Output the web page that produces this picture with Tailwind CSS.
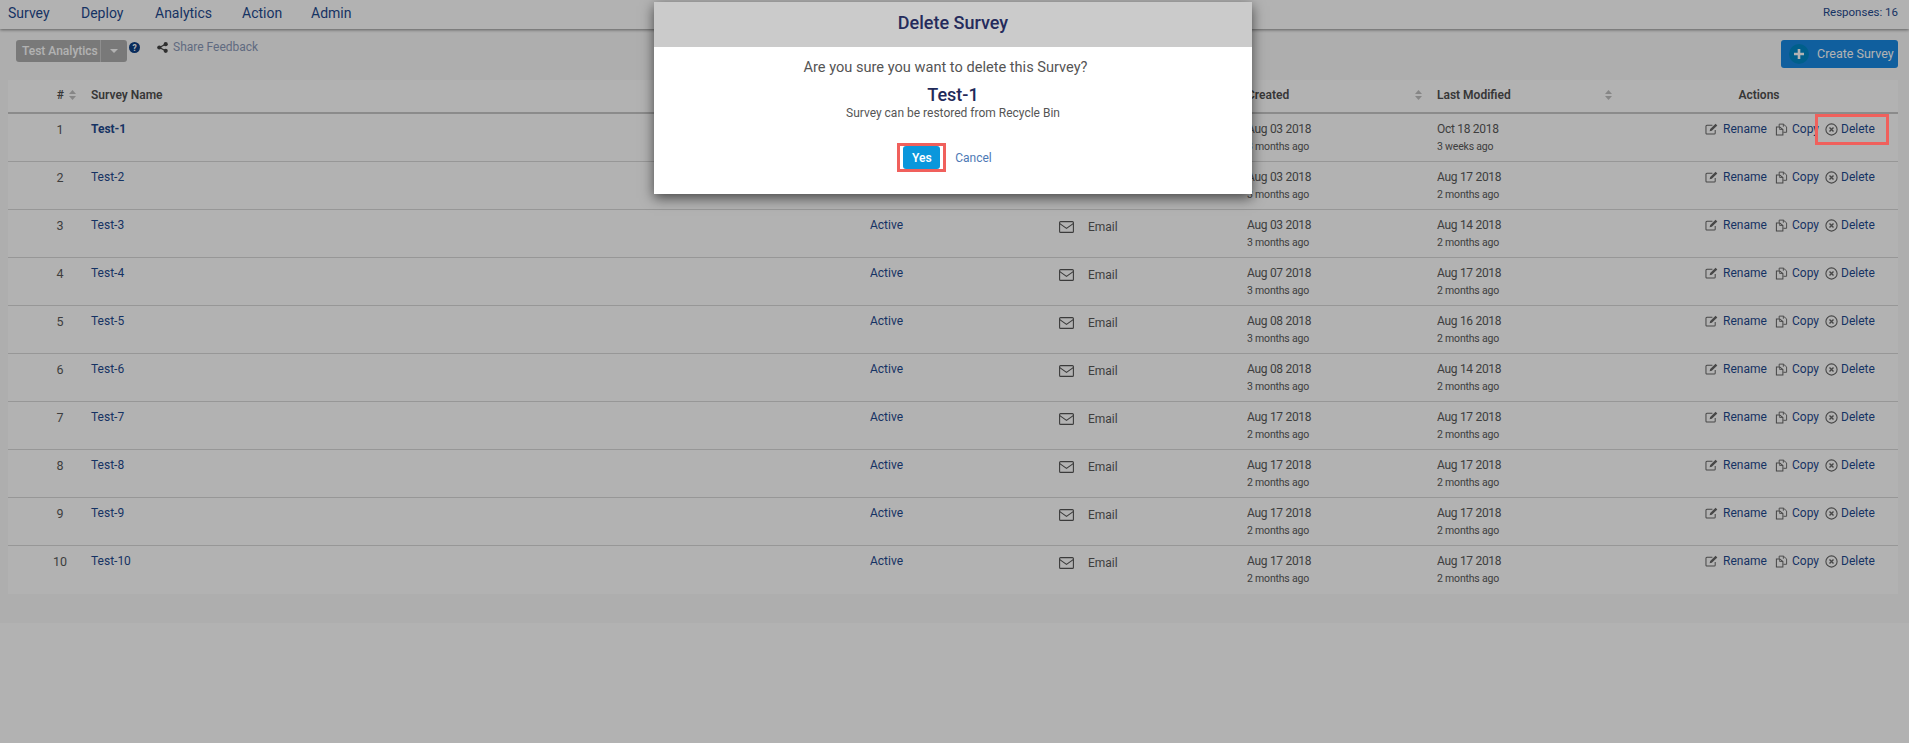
<!DOCTYPE html>
<html>
<head>
<meta charset="utf-8">
<script src="https://cdn.jsdelivr.net/npm/@tailwindcss/browser@4"></script>
</head>
<body class="relative w-[1909px] h-[743px] overflow-hidden bg-white font-['Roboto',sans-serif] text-[12.5px] text-[#5a5a5a]">
<svg class="hidden">
  <symbol id="rename" viewBox="0 0 14 13"><path d="M11 7.5V11a1 1 0 0 1-1 1H2a1 1 0 0 1-1-1V3.5a1 1 0 0 1 1-1h6" fill="none" stroke="currentColor" stroke-width="1.1"/><path d="M5 9l.6-2.4L11.4.8l1.9 1.9L7.4 8.4z" fill="currentColor"/></symbol>
  <symbol id="copy" viewBox="0 0 13 14"><path d="M4 4V1.2h4.5V4M8.5 1.2l3.5 3V10H8.5" fill="none" stroke="currentColor" stroke-width="1"/><path d="M1 4.2h3.5L8 7v6H1z" fill="none" stroke="currentColor" stroke-width="1.1"/><path d="M4.5 4.2V7H8" fill="none" stroke="currentColor" stroke-width=".9"/></symbol>
  <symbol id="del" viewBox="0 0 13 13"><circle cx="6.5" cy="6.5" r="5.6" fill="none" stroke="currentColor" stroke-width="1.1"/><path d="M4.5 4.5l4 4m0-4l-4 4" stroke="currentColor" stroke-width="1.4"/></symbol>
  <symbol id="mail" viewBox="0 0 15 12"><rect x=".6" y=".6" width="13.8" height="10.8" rx="1" fill="none" stroke="currentColor" stroke-width="1.1"/><path d="M.8 2.6L7.5 7.4l6.7-4.8" fill="none" stroke="currentColor" stroke-width="1.1"/></symbol>
  <symbol id="sort" viewBox="0 0 7 10"><path d="M3.5 0L7 4H0zM3.5 10L0 6h7z" fill="currentColor"/></symbol>
</svg>

<header class="h-[29px] bg-white shadow-[0_1px_3px_rgba(0,0,0,0.45)] relative flex items-center justify-between pl-2 pr-[11px] pb-[3px]">
  <nav class="flex text-[14px] text-[#1f4a8f]">
    <a class="w-[73px]">Survey</a><a class="w-[74px]">Deploy</a><a class="w-[87px]">Analytics</a><a class="w-[69px]">Action</a><a>Admin</a>
  </nav>
  <span class="text-[11.5px] text-[#1f4a8f]">Responses: 16</span>
</header>

<main class="h-[594px] bg-[#fafafa] pl-2 pr-[11px] pt-[11px]">
  <div class="h-[40px] flex items-start relative">
    <div class="flex h-[22px] w-[111px] ml-2 rounded-[3px] bg-[#aeaeae] text-white text-[12px] font-medium">
      <span class="w-[85px] pl-[6px] leading-[22px] border-r border-[#ccc]">Test Analytics</span>
      <span class="flex-1 flex items-center justify-center"><svg width="8" height="4" viewBox="0 0 8 4"><path d="M0 0h8L4 4z" fill="#fff"/></svg></span>
    </div>
    <svg class="ml-[2px] mt-[2px] text-[#0d3f85]" width="11" height="11" viewBox="0 0 11 11"><circle cx="5.5" cy="5.5" r="5.5" fill="currentColor"/><text x="5.5" y="8.6" text-anchor="middle" font-size="8.5" font-weight="700" fill="#fff" font-family="Roboto">?</text></svg>
    <svg class="ml-[17px] mt-[2px] text-[#444]" width="11" height="11" viewBox="0 0 11 11"><path d="M8.5 2.2L2.5 5.5l6 3.3" stroke="currentColor" stroke-width="1.3" fill="none"/><circle cx="8.7" cy="2.2" r="2.1" fill="currentColor"/><circle cx="2.3" cy="5.5" r="2.1" fill="currentColor"/><circle cx="8.7" cy="8.8" r="2.1" fill="currentColor"/></svg>
    <span class="ml-[5px] text-[12px] leading-[14px] text-[#8a99b8]">Share Feedback</span>
    <button class="ml-auto h-[28px] w-[117px] rounded-[3px] bg-[#1889e3] text-white text-[12.5px] flex items-center">
      <span class="ml-2 mr-[8px] w-[20px] h-[20px] rounded-full bg-[#0088c8] flex items-center justify-center"><svg width="10" height="10" viewBox="0 0 10 10"><path d="M5 0v10M0 5h10" stroke="#fff" stroke-width="2.6"/></svg></span>Create Survey
    </button>
  </div>

  <section class="bg-white">
    <div class="h-[34px] pb-[2px] grid grid-cols-[83px_779px_189px_188px_190px_263px_198px] items-center border-b-2 border-[#c8c8c8] font-semibold text-[#505050] text-[12px]">
      <div class="flex items-center justify-end pr-[16px] gap-[5px]">#<svg class="w-[7px] h-[10px] text-[#c0c0c0] mr-[-1px]"><use href="#sort"/></svg></div>
      <div>Survey Name</div><div></div><div></div>
      <div class="flex items-center justify-between pr-[15px]">Created<svg class="w-[7px] h-[10px] text-[#c0c0c0]"><use href="#sort"/></svg></div>
      <div class="flex items-center justify-between pr-[88px]">Last Modified<svg class="w-[7px] h-[10px] text-[#c0c0c0]"><use href="#sort"/></svg></div>
      <div class="text-center pr-[80px]">Actions</div>
    </div>

    <div class="h-[48px] grid grid-cols-[83px_779px_189px_188px_190px_263px_198px] border-b border-[#d8d8d8] pt-[8px]">
      <div class="text-center leading-[15px] pl-[21px]">1</div><div class="font-bold text-[12px] text-[#1f4a8f] leading-[15px]">Test-1</div><div class="text-[12px] text-[#1f4a8f] leading-[15px]">Active</div>
      <div class="flex items-start"><svg class="w-[15px] h-[12px] mt-[3px] mr-[14px] text-[#555]"><use href="#mail"/></svg><span class="text-[12px] leading-[18px]">Email</span></div>
      <div class="text-[12px] tracking-[-0.3px] leading-[15px]">Aug 03 2018<div class="text-[10.5px] tracking-[-0.2px] leading-[20px]">3 months ago</div></div><div class="text-[12px] tracking-[-0.3px] leading-[15px]">Oct 18 2018<div class="text-[10.5px] tracking-[-0.2px] leading-[20px]">3 weeks ago</div></div>
      <div class="flex items-start leading-[15px] pl-[5px] text-[12px]"><svg class="w-[13px] h-[12px] mt-[1px] mr-[5px] text-[#666]"><use href="#rename"/></svg><span class="w-[52px] text-[#1f4a8f]">Rename</span><svg class="w-[13px] h-[13px] mt-[1px] mr-[4px] text-[#666]"><use href="#copy"/></svg><span class="w-[33px] text-[#1f4a8f]">Copy</span><svg class="w-[13px] h-[13px] mt-[1px] mr-[3px] text-[#666]"><use href="#del"/></svg><span class="text-[#1f4a8f]">Delete</span></div>
    </div>
    <div class="h-[48px] grid grid-cols-[83px_779px_189px_188px_190px_263px_198px] border-b border-[#d8d8d8] pt-[8px]">
      <div class="text-center leading-[15px] pl-[21px]">2</div><div class="text-[12px] text-[#1f4a8f] leading-[15px]">Test-2</div><div class="text-[12px] text-[#1f4a8f] leading-[15px]">Active</div>
      <div class="flex items-start"><svg class="w-[15px] h-[12px] mt-[3px] mr-[14px] text-[#555]"><use href="#mail"/></svg><span class="text-[12px] leading-[18px]">Email</span></div>
      <div class="text-[12px] tracking-[-0.3px] leading-[15px]">Aug 03 2018<div class="text-[10.5px] tracking-[-0.2px] leading-[20px]">3 months ago</div></div><div class="text-[12px] tracking-[-0.3px] leading-[15px]">Aug 17 2018<div class="text-[10.5px] tracking-[-0.2px] leading-[20px]">2 months ago</div></div>
      <div class="flex items-start leading-[15px] pl-[5px] text-[12px]"><svg class="w-[13px] h-[12px] mt-[1px] mr-[5px] text-[#666]"><use href="#rename"/></svg><span class="w-[52px] text-[#1f4a8f]">Rename</span><svg class="w-[13px] h-[13px] mt-[1px] mr-[4px] text-[#666]"><use href="#copy"/></svg><span class="w-[33px] text-[#1f4a8f]">Copy</span><svg class="w-[13px] h-[13px] mt-[1px] mr-[3px] text-[#666]"><use href="#del"/></svg><span class="text-[#1f4a8f]">Delete</span></div>
    </div>
    <div class="h-[48px] grid grid-cols-[83px_779px_189px_188px_190px_263px_198px] border-b border-[#d8d8d8] pt-[8px]">
      <div class="text-center leading-[15px] pl-[21px]">3</div><div class="text-[12px] text-[#1f4a8f] leading-[15px]">Test-3</div><div class="text-[12px] text-[#1f4a8f] leading-[15px]">Active</div>
      <div class="flex items-start"><svg class="w-[15px] h-[12px] mt-[3px] mr-[14px] text-[#555]"><use href="#mail"/></svg><span class="text-[12px] leading-[18px]">Email</span></div>
      <div class="text-[12px] tracking-[-0.3px] leading-[15px]">Aug 03 2018<div class="text-[10.5px] tracking-[-0.2px] leading-[20px]">3 months ago</div></div><div class="text-[12px] tracking-[-0.3px] leading-[15px]">Aug 14 2018<div class="text-[10.5px] tracking-[-0.2px] leading-[20px]">2 months ago</div></div>
      <div class="flex items-start leading-[15px] pl-[5px] text-[12px]"><svg class="w-[13px] h-[12px] mt-[1px] mr-[5px] text-[#666]"><use href="#rename"/></svg><span class="w-[52px] text-[#1f4a8f]">Rename</span><svg class="w-[13px] h-[13px] mt-[1px] mr-[4px] text-[#666]"><use href="#copy"/></svg><span class="w-[33px] text-[#1f4a8f]">Copy</span><svg class="w-[13px] h-[13px] mt-[1px] mr-[3px] text-[#666]"><use href="#del"/></svg><span class="text-[#1f4a8f]">Delete</span></div>
    </div>
    <div class="h-[48px] grid grid-cols-[83px_779px_189px_188px_190px_263px_198px] border-b border-[#d8d8d8] pt-[8px]">
      <div class="text-center leading-[15px] pl-[21px]">4</div><div class="text-[12px] text-[#1f4a8f] leading-[15px]">Test-4</div><div class="text-[12px] text-[#1f4a8f] leading-[15px]">Active</div>
      <div class="flex items-start"><svg class="w-[15px] h-[12px] mt-[3px] mr-[14px] text-[#555]"><use href="#mail"/></svg><span class="text-[12px] leading-[18px]">Email</span></div>
      <div class="text-[12px] tracking-[-0.3px] leading-[15px]">Aug 07 2018<div class="text-[10.5px] tracking-[-0.2px] leading-[20px]">3 months ago</div></div><div class="text-[12px] tracking-[-0.3px] leading-[15px]">Aug 17 2018<div class="text-[10.5px] tracking-[-0.2px] leading-[20px]">2 months ago</div></div>
      <div class="flex items-start leading-[15px] pl-[5px] text-[12px]"><svg class="w-[13px] h-[12px] mt-[1px] mr-[5px] text-[#666]"><use href="#rename"/></svg><span class="w-[52px] text-[#1f4a8f]">Rename</span><svg class="w-[13px] h-[13px] mt-[1px] mr-[4px] text-[#666]"><use href="#copy"/></svg><span class="w-[33px] text-[#1f4a8f]">Copy</span><svg class="w-[13px] h-[13px] mt-[1px] mr-[3px] text-[#666]"><use href="#del"/></svg><span class="text-[#1f4a8f]">Delete</span></div>
    </div>
    <div class="h-[48px] grid grid-cols-[83px_779px_189px_188px_190px_263px_198px] border-b border-[#d8d8d8] pt-[8px]">
      <div class="text-center leading-[15px] pl-[21px]">5</div><div class="text-[12px] text-[#1f4a8f] leading-[15px]">Test-5</div><div class="text-[12px] text-[#1f4a8f] leading-[15px]">Active</div>
      <div class="flex items-start"><svg class="w-[15px] h-[12px] mt-[3px] mr-[14px] text-[#555]"><use href="#mail"/></svg><span class="text-[12px] leading-[18px]">Email</span></div>
      <div class="text-[12px] tracking-[-0.3px] leading-[15px]">Aug 08 2018<div class="text-[10.5px] tracking-[-0.2px] leading-[20px]">3 months ago</div></div><div class="text-[12px] tracking-[-0.3px] leading-[15px]">Aug 16 2018<div class="text-[10.5px] tracking-[-0.2px] leading-[20px]">2 months ago</div></div>
      <div class="flex items-start leading-[15px] pl-[5px] text-[12px]"><svg class="w-[13px] h-[12px] mt-[1px] mr-[5px] text-[#666]"><use href="#rename"/></svg><span class="w-[52px] text-[#1f4a8f]">Rename</span><svg class="w-[13px] h-[13px] mt-[1px] mr-[4px] text-[#666]"><use href="#copy"/></svg><span class="w-[33px] text-[#1f4a8f]">Copy</span><svg class="w-[13px] h-[13px] mt-[1px] mr-[3px] text-[#666]"><use href="#del"/></svg><span class="text-[#1f4a8f]">Delete</span></div>
    </div>
    <div class="h-[48px] grid grid-cols-[83px_779px_189px_188px_190px_263px_198px] border-b border-[#d8d8d8] pt-[8px]">
      <div class="text-center leading-[15px] pl-[21px]">6</div><div class="text-[12px] text-[#1f4a8f] leading-[15px]">Test-6</div><div class="text-[12px] text-[#1f4a8f] leading-[15px]">Active</div>
      <div class="flex items-start"><svg class="w-[15px] h-[12px] mt-[3px] mr-[14px] text-[#555]"><use href="#mail"/></svg><span class="text-[12px] leading-[18px]">Email</span></div>
      <div class="text-[12px] tracking-[-0.3px] leading-[15px]">Aug 08 2018<div class="text-[10.5px] tracking-[-0.2px] leading-[20px]">3 months ago</div></div><div class="text-[12px] tracking-[-0.3px] leading-[15px]">Aug 14 2018<div class="text-[10.5px] tracking-[-0.2px] leading-[20px]">2 months ago</div></div>
      <div class="flex items-start leading-[15px] pl-[5px] text-[12px]"><svg class="w-[13px] h-[12px] mt-[1px] mr-[5px] text-[#666]"><use href="#rename"/></svg><span class="w-[52px] text-[#1f4a8f]">Rename</span><svg class="w-[13px] h-[13px] mt-[1px] mr-[4px] text-[#666]"><use href="#copy"/></svg><span class="w-[33px] text-[#1f4a8f]">Copy</span><svg class="w-[13px] h-[13px] mt-[1px] mr-[3px] text-[#666]"><use href="#del"/></svg><span class="text-[#1f4a8f]">Delete</span></div>
    </div>
    <div class="h-[48px] grid grid-cols-[83px_779px_189px_188px_190px_263px_198px] border-b border-[#d8d8d8] pt-[8px]">
      <div class="text-center leading-[15px] pl-[21px]">7</div><div class="text-[12px] text-[#1f4a8f] leading-[15px]">Test-7</div><div class="text-[12px] text-[#1f4a8f] leading-[15px]">Active</div>
      <div class="flex items-start"><svg class="w-[15px] h-[12px] mt-[3px] mr-[14px] text-[#555]"><use href="#mail"/></svg><span class="text-[12px] leading-[18px]">Email</span></div>
      <div class="text-[12px] tracking-[-0.3px] leading-[15px]">Aug 17 2018<div class="text-[10.5px] tracking-[-0.2px] leading-[20px]">2 months ago</div></div><div class="text-[12px] tracking-[-0.3px] leading-[15px]">Aug 17 2018<div class="text-[10.5px] tracking-[-0.2px] leading-[20px]">2 months ago</div></div>
      <div class="flex items-start leading-[15px] pl-[5px] text-[12px]"><svg class="w-[13px] h-[12px] mt-[1px] mr-[5px] text-[#666]"><use href="#rename"/></svg><span class="w-[52px] text-[#1f4a8f]">Rename</span><svg class="w-[13px] h-[13px] mt-[1px] mr-[4px] text-[#666]"><use href="#copy"/></svg><span class="w-[33px] text-[#1f4a8f]">Copy</span><svg class="w-[13px] h-[13px] mt-[1px] mr-[3px] text-[#666]"><use href="#del"/></svg><span class="text-[#1f4a8f]">Delete</span></div>
    </div>
    <div class="h-[48px] grid grid-cols-[83px_779px_189px_188px_190px_263px_198px] border-b border-[#d8d8d8] pt-[8px]">
      <div class="text-center leading-[15px] pl-[21px]">8</div><div class="text-[12px] text-[#1f4a8f] leading-[15px]">Test-8</div><div class="text-[12px] text-[#1f4a8f] leading-[15px]">Active</div>
      <div class="flex items-start"><svg class="w-[15px] h-[12px] mt-[3px] mr-[14px] text-[#555]"><use href="#mail"/></svg><span class="text-[12px] leading-[18px]">Email</span></div>
      <div class="text-[12px] tracking-[-0.3px] leading-[15px]">Aug 17 2018<div class="text-[10.5px] tracking-[-0.2px] leading-[20px]">2 months ago</div></div><div class="text-[12px] tracking-[-0.3px] leading-[15px]">Aug 17 2018<div class="text-[10.5px] tracking-[-0.2px] leading-[20px]">2 months ago</div></div>
      <div class="flex items-start leading-[15px] pl-[5px] text-[12px]"><svg class="w-[13px] h-[12px] mt-[1px] mr-[5px] text-[#666]"><use href="#rename"/></svg><span class="w-[52px] text-[#1f4a8f]">Rename</span><svg class="w-[13px] h-[13px] mt-[1px] mr-[4px] text-[#666]"><use href="#copy"/></svg><span class="w-[33px] text-[#1f4a8f]">Copy</span><svg class="w-[13px] h-[13px] mt-[1px] mr-[3px] text-[#666]"><use href="#del"/></svg><span class="text-[#1f4a8f]">Delete</span></div>
    </div>
    <div class="h-[48px] grid grid-cols-[83px_779px_189px_188px_190px_263px_198px] border-b border-[#d8d8d8] pt-[8px]">
      <div class="text-center leading-[15px] pl-[21px]">9</div><div class="text-[12px] text-[#1f4a8f] leading-[15px]">Test-9</div><div class="text-[12px] text-[#1f4a8f] leading-[15px]">Active</div>
      <div class="flex items-start"><svg class="w-[15px] h-[12px] mt-[3px] mr-[14px] text-[#555]"><use href="#mail"/></svg><span class="text-[12px] leading-[18px]">Email</span></div>
      <div class="text-[12px] tracking-[-0.3px] leading-[15px]">Aug 17 2018<div class="text-[10.5px] tracking-[-0.2px] leading-[20px]">2 months ago</div></div><div class="text-[12px] tracking-[-0.3px] leading-[15px]">Aug 17 2018<div class="text-[10.5px] tracking-[-0.2px] leading-[20px]">2 months ago</div></div>
      <div class="flex items-start leading-[15px] pl-[5px] text-[12px]"><svg class="w-[13px] h-[12px] mt-[1px] mr-[5px] text-[#666]"><use href="#rename"/></svg><span class="w-[52px] text-[#1f4a8f]">Rename</span><svg class="w-[13px] h-[13px] mt-[1px] mr-[4px] text-[#666]"><use href="#copy"/></svg><span class="w-[33px] text-[#1f4a8f]">Copy</span><svg class="w-[13px] h-[13px] mt-[1px] mr-[3px] text-[#666]"><use href="#del"/></svg><span class="text-[#1f4a8f]">Delete</span></div>
    </div>
    <div class="h-[48px] grid grid-cols-[83px_779px_189px_188px_190px_263px_198px] pt-[8px]">
      <div class="text-center leading-[15px] pl-[21px]">10</div><div class="text-[12px] text-[#1f4a8f] leading-[15px]">Test-10</div><div class="text-[12px] text-[#1f4a8f] leading-[15px]">Active</div>
      <div class="flex items-start"><svg class="w-[15px] h-[12px] mt-[3px] mr-[14px] text-[#555]"><use href="#mail"/></svg><span class="text-[12px] leading-[18px]">Email</span></div>
      <div class="text-[12px] tracking-[-0.3px] leading-[15px]">Aug 17 2018<div class="text-[10.5px] tracking-[-0.2px] leading-[20px]">2 months ago</div></div><div class="text-[12px] tracking-[-0.3px] leading-[15px]">Aug 17 2018<div class="text-[10.5px] tracking-[-0.2px] leading-[20px]">2 months ago</div></div>
      <div class="flex items-start leading-[15px] pl-[5px] text-[12px]"><svg class="w-[13px] h-[12px] mt-[1px] mr-[5px] text-[#666]"><use href="#rename"/></svg><span class="w-[52px] text-[#1f4a8f]">Rename</span><svg class="w-[13px] h-[13px] mt-[1px] mr-[4px] text-[#666]"><use href="#copy"/></svg><span class="w-[33px] text-[#1f4a8f]">Copy</span><svg class="w-[13px] h-[13px] mt-[1px] mr-[3px] text-[#666]"><use href="#del"/></svg><span class="text-[#1f4a8f]">Delete</span></div>
    </div>
  </section>
</main>

<div class="absolute inset-0 bg-black/30"></div>
<div class="absolute left-[1815px] top-[114px] w-[74px] h-[31px] border-[3px] border-[#f0605c]"></div>

<div class="absolute left-[654px] top-[2px] w-[598px] h-[192px] bg-white shadow-[0_4px_12px_rgba(0,0,0,0.6)] text-center">
  <div class="h-[45px] bg-[#cbcbcb] text-[18px] font-medium leading-[42px] text-[#252b5c]">Delete Survey</div>
  <p class="mt-[11px] pr-[15px] text-[14.6px] leading-[18px] text-[#555]">Are you sure you want to delete this Survey?</p>
  <p class="mt-[8px] text-[18px] leading-[22px] font-medium text-[#1f2a5a]">Test-1</p>
  <p class="text-[12px] leading-[15px] text-[#555]">Survey can be restored from Recycle Bin</p>
  <div class="mt-[22px] flex items-center justify-center pr-[17px]">
    <span class="border-[3px] border-[#f0605c] px-[3px] h-[29px] w-[49px] flex items-center">
      <button class="w-[37px] h-[23px] rounded-[3px] bg-[#0a97dc] text-white text-[12px] font-semibold">Yes</button>
    </span>
    <a class="ml-[9px] text-[12px] text-[#4d79b5]">Cancel</a>
  </div>
</div>
</body>
</html>
